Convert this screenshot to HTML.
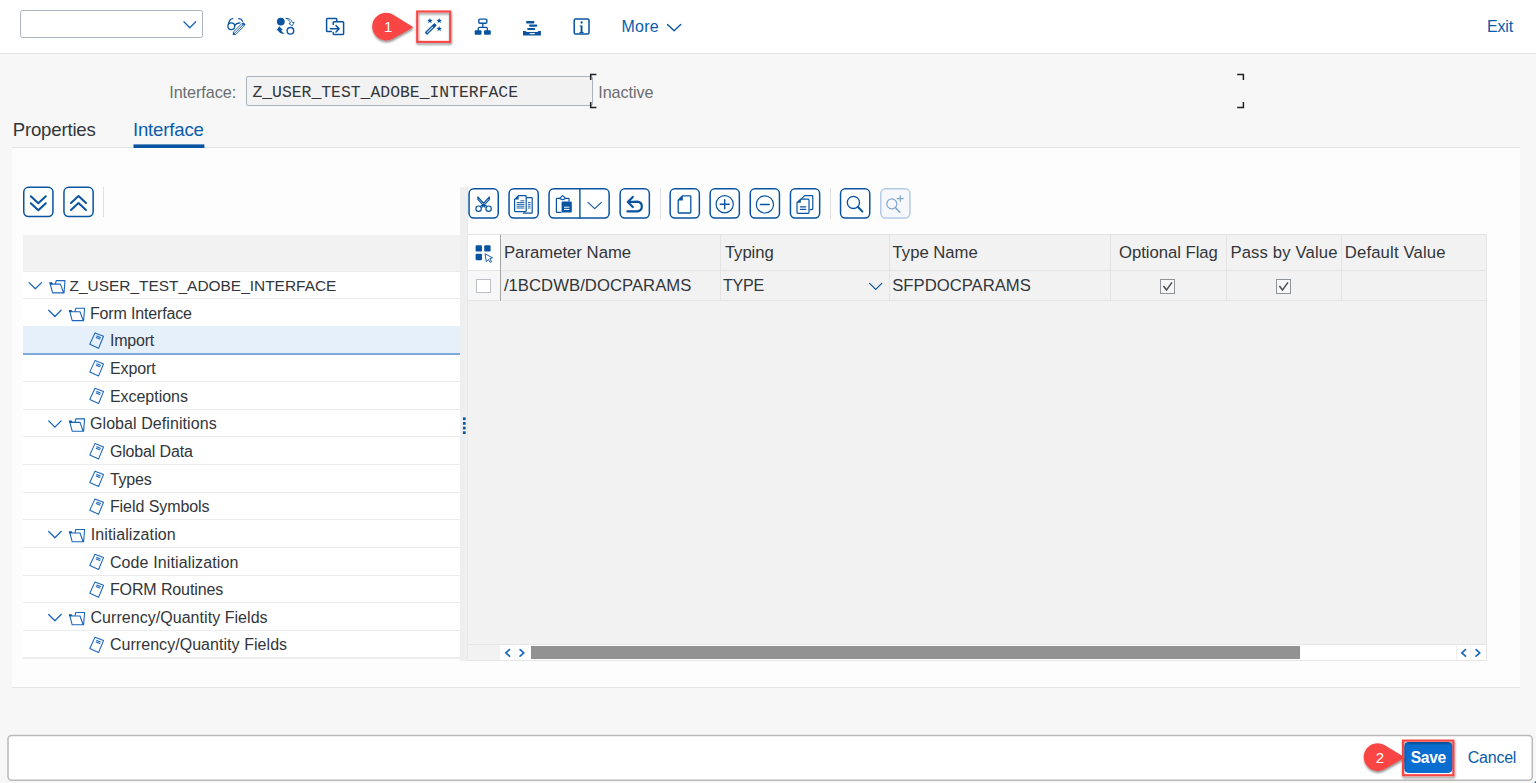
<!DOCTYPE html>
<html lang="en">
<head>
<meta charset="utf-8">
<title>Form Builder: Interface</title>
<style>
*{box-sizing:border-box;margin:0;padding:0}
html,body{width:1536px;height:783px;overflow:hidden;background:#f7f7f7;font-family:"Liberation Sans",sans-serif;color:#32363a}
.abs{position:absolute}
#top{left:0;top:0;width:1536px;height:54px;background:#fff;border-bottom:1px solid #e5e5e5}
#combo{left:20.2px;top:10.2px;width:182.6px;height:27.4px;border:1px solid #aab3bf;border-radius:2.5px;background:#fff}
.tx{position:absolute;white-space:nowrap;line-height:1}
.blue{color:#0a5cab}
svg{position:absolute;overflow:visible}
.ic{fill:none;stroke:#0854a0;stroke-width:1.4;stroke-linecap:round;stroke-linejoin:round}
.fl{fill:#0854a0;stroke:none}
.cn{font-family:"Liberation Sans",sans-serif;font-size:15px;fill:#fff}
#panel{left:12px;top:148px;width:1508px;height:540px;background:#fdfdfd;border-bottom:1px solid #e5e5e5}
.sep{position:absolute;width:1px;background:#e0e0e0}
.tl{color:#32363a}
.ti{stroke:#1a66bb}
.hc{position:absolute;top:235px;height:36px;background:#f2f2f2;border-right:1px solid #e4e4e4;border-bottom:1px solid #e4e4e4;font-size:16px;line-height:35px;padding-left:4px;white-space:nowrap;overflow:hidden}
.rc{position:absolute;top:271px;height:30px;background:#f2f2f2;border-right:1px solid #e4e4e4;border-bottom:1px solid #e4e4e4;font-size:16px;line-height:31px;padding-left:3px;white-space:nowrap;overflow:hidden}
</style>
</head>
<body>
<!-- ===== top toolbar ===== -->
<div id="top" class="abs"></div>
<div id="combo" class="abs"></div>
<svg style="left:0;top:0" width="700" height="54" viewBox="0 0 700 54"><path class="ic ti" d="M183.9 21.7 L189.8 27.8 L195.7 21.7" style="stroke-width:1.25"/><path class="ic" d="M667.5 24.5 L674.1 30.8 L680.7 24.5" style="stroke-width:1.35"/></svg>
<!--TOPICONS_START-->
<svg style="left:0;top:0" width="1536" height="54" viewBox="0 0 1536 54">
<!-- 1 glasses + pencil -->
<g class="ic" style="stroke-width:1.25">
<circle cx="231.3" cy="26.3" r="3.4"/>
<path d="M228.4 24.2 C229 21 230.4 18.7 232.8 18.6"/>
<path d="M238.8 18.7 C240.6 18.6 241.9 19.8 242.6 21.3"/>
<path d="M234.7 25.4 C235.8 23.6 237.6 22.9 240 22.8"/>
</g>
<path class="fl" d="M232.6 35.2 L233.4 32 L235.8 34.4 Z"/>
<path class="ic" style="stroke-width:0.9" d="M233.4 32 L241.4 24 L243.8 26.4 L235.8 34.4 Z M234.6 33.2 L242.6 25.2"/>
<path class="fl" d="M241.9 23.5 L242.8 22.6 Q243.4 22.2 243.9 22.7 L245.1 23.9 Q245.6 24.4 245.1 25 L244.3 25.9 Z"/>
<!-- 2 activate toggle -->
<circle class="fl" cx="280.8" cy="21.6" r="3.9"/>
<circle class="ic" cx="290.4" cy="30.8" r="3.3" style="stroke-width:1.4"/>
<path class="fl" d="M276.4 30.4 L279.3 26.3 L282.8 30 L281.3 30.1 C281.8 31.8 283 33 284.9 33.6 C281.6 34.4 279 33 278 30.3 Z"/>
<path class="ic" style="stroke-width:0.85" d="M286.2 18.3 C289.6 18.3 291.8 20 292.4 22.6 L294.2 22.4 L292.2 25.9 L288.9 23.5 L290.4 23.1 C290 21.2 288.6 19.4 286.2 18.3 Z"/>
<!-- 3 other object -->
<g class="ic" style="stroke-width:1.5">
<path d="M331.4 31.6 L327.4 31.6 Q326.6 31.6 326.6 30.8 L326.6 19.4 Q326.6 18.6 327.4 18.6 L336 18.6 Q336.8 18.6 336.8 19.4 L336.8 20.4"/>
<path d="M333.2 24.4 L333.2 22.6 Q333.2 21.8 334 21.8 L342.8 21.8 Q343.6 21.8 343.6 22.6 L343.6 33.6 Q343.6 34.4 342.8 34.4 L334 34.4 Q333.2 34.4 333.2 33.6 L333.2 32.6"/>
<path d="M330.4 28.8 L338.8 28.8 M336 25.6 L339.2 28.8 L336 32"/>
</g>
<!-- callout 1 -->
<g filter="url(#ds)">
<path d="M413.4 27.3 L393.3 14.7 A13.9 13.9 0 1 0 393.3 38.5 Z" fill="#fa4444"/>
</g>
<text class="cn" x="388.1" y="31.9" text-anchor="middle">1</text>
<!-- 4 wand -->
<g class="fl">
<path d="M0 -2.9 L0.75 -0.95 L2.8 -0.9 L1.2 0.4 L1.75 2.4 L0 1.25 L-1.75 2.4 L-1.2 0.4 L-2.8 -0.9 L-0.75 -0.95 Z" transform="translate(429.9 20.8)"/>
<path d="M0 -2.9 L0.75 -0.95 L2.8 -0.9 L1.2 0.4 L1.75 2.4 L0 1.25 L-1.75 2.4 L-1.2 0.4 L-2.8 -0.9 L-0.75 -0.95 Z" transform="translate(439.2 20.8)"/>
<path d="M0 -2.9 L0.75 -0.95 L2.8 -0.9 L1.2 0.4 L1.75 2.4 L0 1.25 L-1.75 2.4 L-1.2 0.4 L-2.8 -0.9 L-0.75 -0.95 Z" transform="translate(439.2 28.8)"/>
</g>
<path class="ic" style="stroke-width:1.3" d="M425.6 32.5 L434.4 23.9 L435.9 25.4 L427.1 34 Z"/>
<path class="fl" d="M432 26 L434.4 23.6 L436.2 25.4 L433.8 27.8 Z"/>
<!-- 5 hierarchy -->
<rect class="ic" x="478.8" y="19.1" width="8" height="4.2" rx="1" style="stroke-width:1.4"/>
<path class="ic" style="stroke-width:1.3" d="M482.8 23.4 L482.8 27.4 M478.2 30.4 L478.2 28.8 Q478.2 27.4 479.6 27.4 L486 27.4 Q487.4 27.4 487.4 28.8 L487.4 30.4"/>
<rect class="fl" x="474.7" y="30.2" width="6.8" height="4.6" rx="1"/>
<rect class="fl" x="484" y="30.2" width="6.8" height="4.6" rx="1"/>
<!-- 6 stack -->
<rect class="fl" x="526.1" y="21.1" width="8.3" height="2.3" rx="0.8"/>
<rect class="fl" x="529.1" y="24.5" width="8.1" height="2.3" rx="0.8"/>
<rect class="fl" x="527.2" y="27.9" width="7.9" height="2.2" rx="0.8"/>
<path class="fl" d="M523 31.1 L525.6 31.1 L526.6 32.1 L537.4 32.1 L538.4 31.1 L540.9 31.1 L540.9 35.5 L523 35.5 Z"/>
<rect x="529.7" y="33.1" width="5.1" height="1.1" fill="#fff"/>
<!-- 7 info -->
<rect class="ic" x="574.2" y="19.1" width="14.8" height="15" rx="1.4" style="stroke-width:1.5"/>
<circle class="fl" cx="581.6" cy="22.5" r="1.15"/>
<path class="fl" d="M579.6 25.6 L582.5 25.6 L582.5 31.8 L583.8 32.6 L583.8 33 L579.2 33 L579.2 32.6 L580.6 31.8 L580.6 26.6 L579.6 26.3 Z"/>
<!-- red box around wand -->
<defs>
<filter id="ds" x="-30%" y="-30%" width="160%" height="170%"><feDropShadow dx="0.5" dy="1.8" stdDeviation="1.3" flood-color="#000" flood-opacity="0.45"/></filter>
</defs>
<g filter="url(#ds)"><rect x="417.2" y="11.5" width="33" height="30.4" fill="none" stroke="#fa4444" stroke-width="2.1"/></g>
</svg>
<!--TOPICONS_END-->

<!-- ===== header ===== -->
<div class="abs" style="left:246px;top:76px;width:347px;height:30px;background:#f2f2f2;border:1px solid #a9b4be;border-radius:2px"></div>
<!--BRACKETS_START-->
<svg style="left:580px;top:70px" width="680" height="45" viewBox="580 70 680 45"><g fill="none" stroke="#1d2126" stroke-width="1.5">
<path d="M596.4 74.5 L590.7 74.5 L590.7 80"/><path d="M596.4 107.6 L590.7 107.6 L590.7 102"/>
<path d="M1237.2 74.5 L1243.4 74.5 L1243.4 80.1"/><path d="M1237.2 107.6 L1243.4 107.6 L1243.4 101.9"/>
</g></svg>
<!--BRACKETS_END-->

<!-- ===== tabs ===== -->
<div class="abs" style="left:12px;top:147px;width:1508px;height:1px;background:#e3e3e3"></div>
<div id="panel" class="abs"></div>
<svg style="left:130px;top:140px" width="80" height="10" viewBox="130 140 80 10"><rect x="133.5" y="144.4" width="70.9" height="3.6" fill="#0854a0"/></svg>

<!--TREE_START-->
<!-- ===== tree ===== -->
<svg style="left:23px;top:186px" width="33" height="33"><rect x="0.75" y="1.35" width="29.20" height="29.20" rx="4.8" fill="#fff" stroke="#0854a0" stroke-width="1.5"/></svg>
<svg style="left:63px;top:186px" width="33" height="33"><rect x="0.95" y="1.35" width="29.20" height="29.20" rx="4.8" fill="#fff" stroke="#0854a0" stroke-width="1.5"/></svg>
<div class="sep" style="left:103px;top:187px;height:30px"></div>
<div class="abs" style="left:23px;top:235px;width:437.5px;height:36.7px;background:#f2f2f2;border-bottom:1.2px solid #ebebeb"></div>
<div class="abs" style="left:23px;top:271.7px;width:437.5px;height:390px;background:#fff"></div>
<div class="abs" style="left:23px;top:297.91px;width:437.5px;height:1.1px;background:#ececec"></div>
<div class="tx tl" style="left:69.60px;top:278.37px;font-size:15.45px;letter-spacing:0.000px">Z_USER_TEST_ADOBE_INTERFACE</div>
<div class="abs" style="left:23px;top:325.57px;width:437.5px;height:1.1px;background:#ececec"></div>
<div class="tx tl" style="left:90.00px;top:305.57px;font-size:16px;letter-spacing:-0.162px">Form Interface</div>
<div class="abs" style="left:23px;top:325.82px;width:437.5px;height:29.26px;background:#e5f0fa;border-bottom:2px solid #7fa9d9"></div>
<div class="tx tl" style="left:109.90px;top:333.23px;font-size:16px;letter-spacing:-0.192px">Import</div>
<div class="abs" style="left:23px;top:380.89px;width:437.5px;height:1.1px;background:#ececec"></div>
<div class="tx tl" style="left:109.90px;top:360.89px;font-size:16px;letter-spacing:-0.068px">Export</div>
<div class="abs" style="left:23px;top:408.55px;width:437.5px;height:1.1px;background:#ececec"></div>
<div class="tx tl" style="left:109.90px;top:388.55px;font-size:16px;letter-spacing:-0.027px">Exceptions</div>
<div class="abs" style="left:23px;top:436.21px;width:437.5px;height:1.1px;background:#ececec"></div>
<div class="tx tl" style="left:90.00px;top:416.21px;font-size:16px;letter-spacing:0.074px">Global Definitions</div>
<div class="abs" style="left:23px;top:463.87px;width:437.5px;height:1.1px;background:#ececec"></div>
<div class="tx tl" style="left:109.90px;top:443.87px;font-size:16px;letter-spacing:-0.146px">Global Data</div>
<div class="abs" style="left:23px;top:491.53px;width:437.5px;height:1.1px;background:#ececec"></div>
<div class="tx tl" style="left:109.90px;top:471.53px;font-size:16px;letter-spacing:-0.205px">Types</div>
<div class="abs" style="left:23px;top:519.19px;width:437.5px;height:1.1px;background:#ececec"></div>
<div class="tx tl" style="left:109.90px;top:499.19px;font-size:16px;letter-spacing:-0.065px">Field Symbols</div>
<div class="abs" style="left:23px;top:546.85px;width:437.5px;height:1.1px;background:#ececec"></div>
<div class="tx tl" style="left:90.70px;top:526.85px;font-size:16px;letter-spacing:0.108px">Initialization</div>
<div class="abs" style="left:23px;top:574.51px;width:437.5px;height:1.1px;background:#ececec"></div>
<div class="tx tl" style="left:109.90px;top:554.51px;font-size:16px;letter-spacing:0.121px">Code Initialization</div>
<div class="abs" style="left:23px;top:602.17px;width:437.5px;height:1.1px;background:#ececec"></div>
<div class="tx tl" style="left:109.90px;top:582.17px;font-size:16px;letter-spacing:-0.110px">FORM Routines</div>
<div class="abs" style="left:23px;top:629.83px;width:437.5px;height:1.1px;background:#ececec"></div>
<div class="tx tl" style="left:90.50px;top:609.83px;font-size:16px;letter-spacing:0.044px">Currency/Quantity Fields</div>
<div class="abs" style="left:23px;top:657.49px;width:437.5px;height:1.1px;background:#ececec"></div>
<div class="tx tl" style="left:109.90px;top:637.49px;font-size:16px;letter-spacing:0.049px">Currency/Quantity Fields</div>
<svg style="left:0;top:0" width="470" height="783" viewBox="0 0 470 783">
<g class="ic" style="stroke-width:2">
<path d="M30.8 196.2 L38.3 203.2 L45.8 196.2 M30.8 203.2 L38.3 210.2 L45.8 203.2"/>
<path d="M71 203 L78.5 196 L86 203 M71 210 L78.5 203 L86 210"/>
</g>
<path class="ic ti" style="stroke-width:1.3" d="M29.1 282.6 l6.2 6.2 l6.2 -6.2"/>
<g transform="translate(49.2 279.9)"><path class="ic ti" style="stroke-width:1.1" d="M0.9 3.6 L3.4 13 L14.4 13 L11.2 4.2 L1.4 4.2 M6.2 4 L7 0.7 L15.8 0.7 L14.8 13 M11.2 4.2 L14.4 13"/><path class="fl" d="M0 2.4 L2.6 2.4 L4 4 L0.6 4.4 Z"/></g>
<path class="ic ti" style="stroke-width:1.3" d="M48.7 310.3 l6.2 6.2 l6.2 -6.2"/>
<g transform="translate(68.8 307.6)"><path class="ic ti" style="stroke-width:1.1" d="M0.9 3.6 L3.4 13 L14.4 13 L11.2 4.2 L1.4 4.2 M6.2 4 L7 0.7 L15.8 0.7 L14.8 13 M11.2 4.2 L14.4 13"/><path class="fl" d="M0 2.4 L2.6 2.4 L4 4 L0.6 4.4 Z"/></g>
<g transform="translate(89.2 332.4)"><path class="ic ti" style="stroke-width:1.05" d="M5.8 0.5 L14.3 3.9 L9.4 15.8 L0.6 11.8 Z M7.6 3.7 L11.2 5.2 M7 5.2 L10.6 6.7"/></g>
<g transform="translate(89.2 360.1)"><path class="ic ti" style="stroke-width:1.05" d="M5.8 0.5 L14.3 3.9 L9.4 15.8 L0.6 11.8 Z M7.6 3.7 L11.2 5.2 M7 5.2 L10.6 6.7"/></g>
<g transform="translate(89.2 387.7)"><path class="ic ti" style="stroke-width:1.05" d="M5.8 0.5 L14.3 3.9 L9.4 15.8 L0.6 11.8 Z M7.6 3.7 L11.2 5.2 M7 5.2 L10.6 6.7"/></g>
<path class="ic ti" style="stroke-width:1.3" d="M48.7 420.9 l6.2 6.2 l6.2 -6.2"/>
<g transform="translate(68.8 418.2)"><path class="ic ti" style="stroke-width:1.1" d="M0.9 3.6 L3.4 13 L14.4 13 L11.2 4.2 L1.4 4.2 M6.2 4 L7 0.7 L15.8 0.7 L14.8 13 M11.2 4.2 L14.4 13"/><path class="fl" d="M0 2.4 L2.6 2.4 L4 4 L0.6 4.4 Z"/></g>
<g transform="translate(89.2 443.1)"><path class="ic ti" style="stroke-width:1.05" d="M5.8 0.5 L14.3 3.9 L9.4 15.8 L0.6 11.8 Z M7.6 3.7 L11.2 5.2 M7 5.2 L10.6 6.7"/></g>
<g transform="translate(89.2 470.7)"><path class="ic ti" style="stroke-width:1.05" d="M5.8 0.5 L14.3 3.9 L9.4 15.8 L0.6 11.8 Z M7.6 3.7 L11.2 5.2 M7 5.2 L10.6 6.7"/></g>
<g transform="translate(89.2 498.4)"><path class="ic ti" style="stroke-width:1.05" d="M5.8 0.5 L14.3 3.9 L9.4 15.8 L0.6 11.8 Z M7.6 3.7 L11.2 5.2 M7 5.2 L10.6 6.7"/></g>
<path class="ic ti" style="stroke-width:1.3" d="M48.7 531.5 l6.2 6.2 l6.2 -6.2"/>
<g transform="translate(68.8 528.8)"><path class="ic ti" style="stroke-width:1.1" d="M0.9 3.6 L3.4 13 L14.4 13 L11.2 4.2 L1.4 4.2 M6.2 4 L7 0.7 L15.8 0.7 L14.8 13 M11.2 4.2 L14.4 13"/><path class="fl" d="M0 2.4 L2.6 2.4 L4 4 L0.6 4.4 Z"/></g>
<g transform="translate(89.2 553.7)"><path class="ic ti" style="stroke-width:1.05" d="M5.8 0.5 L14.3 3.9 L9.4 15.8 L0.6 11.8 Z M7.6 3.7 L11.2 5.2 M7 5.2 L10.6 6.7"/></g>
<g transform="translate(89.2 581.4)"><path class="ic ti" style="stroke-width:1.05" d="M5.8 0.5 L14.3 3.9 L9.4 15.8 L0.6 11.8 Z M7.6 3.7 L11.2 5.2 M7 5.2 L10.6 6.7"/></g>
<path class="ic ti" style="stroke-width:1.3" d="M48.7 614.5 l6.2 6.2 l6.2 -6.2"/>
<g transform="translate(68.8 611.8)"><path class="ic ti" style="stroke-width:1.1" d="M0.9 3.6 L3.4 13 L14.4 13 L11.2 4.2 L1.4 4.2 M6.2 4 L7 0.7 L15.8 0.7 L14.8 13 M11.2 4.2 L14.4 13"/><path class="fl" d="M0 2.4 L2.6 2.4 L4 4 L0.6 4.4 Z"/></g>
<g transform="translate(89.2 636.7)"><path class="ic ti" style="stroke-width:1.05" d="M5.8 0.5 L14.3 3.9 L9.4 15.8 L0.6 11.8 Z M7.6 3.7 L11.2 5.2 M7 5.2 L10.6 6.7"/></g>
</svg>
<!--TREE_END-->
<!--RIGHT_START-->
<!-- ===== splitter ===== -->
<div class="abs" style="left:460px;top:187px;width:8px;height:474px;background:#eeeff0;border-right:1px solid #e9e9e9"></div>
<svg style="left:460px;top:410px" width="10" height="30" viewBox="460 410 10 30"><g class="fl"><rect x="462.95" y="417.4" width="2.7" height="2.7"/><rect x="462.95" y="422.05" width="2.7" height="2.7"/><rect x="462.95" y="426.7" width="2.7" height="2.7"/><rect x="462.95" y="431.3" width="2.7" height="2.7"/></g></svg>
<!-- ===== right toolbar ===== -->
<svg style="left:468px;top:188px" width="33" height="33"><rect x="1.05" y="0.85" width="29.20" height="29.20" rx="4.8" fill="#fff" stroke="#0854a0" stroke-width="1.5"/></svg>
<svg style="left:508px;top:188px" width="33" height="33"><rect x="1.05" y="0.85" width="29.20" height="29.20" rx="4.8" fill="#fff" stroke="#0854a0" stroke-width="1.5"/></svg>
<svg style="left:548px;top:188px" width="64" height="33"><rect x="1.05" y="0.85" width="60.10" height="29.20" rx="4.8" fill="#fff" stroke="#0854a0" stroke-width="1.5"/></svg>
<svg style="left:619px;top:188px" width="33" height="33"><rect x="1.15" y="0.85" width="29.20" height="29.20" rx="4.8" fill="#fff" stroke="#0854a0" stroke-width="1.5"/></svg>
<div class="sep" style="left:659.5px;top:188px;height:31px"></div>
<svg style="left:669px;top:188px" width="33" height="33"><rect x="1.15" y="0.85" width="29.20" height="29.20" rx="4.8" fill="#fff" stroke="#0854a0" stroke-width="1.5"/></svg>
<svg style="left:709px;top:188px" width="33" height="33"><rect x="1.15" y="0.85" width="29.20" height="29.20" rx="4.8" fill="#fff" stroke="#0854a0" stroke-width="1.5"/></svg>
<svg style="left:749px;top:188px" width="33" height="33"><rect x="1.25" y="0.85" width="29.20" height="29.20" rx="4.8" fill="#fff" stroke="#0854a0" stroke-width="1.5"/></svg>
<svg style="left:789px;top:188px" width="33" height="33"><rect x="1.45" y="0.85" width="29.20" height="29.20" rx="4.8" fill="#fff" stroke="#0854a0" stroke-width="1.5"/></svg>
<div class="sep" style="left:830px;top:188px;height:31px"></div>
<svg style="left:839px;top:188px" width="33" height="33"><rect x="1.55" y="0.85" width="29.20" height="29.20" rx="4.8" fill="#fff" stroke="#0854a0" stroke-width="1.5"/></svg>
<svg style="left:880px;top:188px" width="33" height="33"><rect x="0.75" y="0.85" width="29.20" height="29.20" rx="4.8" fill="#f5f7fa" stroke="#b3cbe6" stroke-width="1.5"/></svg>
<!--RTICONS_START-->
<svg style="left:0;top:180px" width="1536" height="130" viewBox="0 180 1536 130">
<!-- scissors -->
<g class="ic" style="stroke-width:1.2">
<circle cx="478.6" cy="208.7" r="2.7"/><circle cx="488.6" cy="208.7" r="2.7"/>
<path d="M480.4 206.6 L489.4 197 L489.2 199.6 L482.2 207.2 M486.8 206.6 L477.8 197 L478 199.6 L485 207.2"/>
</g>
<!-- copy -->
<g class="ic" style="stroke-width:1.2">
<path d="M526.6 197.6 L531.6 197.6 Q532.2 197.6 532.2 198.2 L532.2 212.6 Q532.2 213.2 531.6 213.2 L523.4 213.2"/>
<path d="M518.4 195.6 L525.4 195.6 Q526.2 195.6 526.2 196.4 L526.2 210.8 Q526.2 211.6 525.4 211.6 L515.4 211.6 Q514.6 211.6 514.6 210.8 L514.6 199.4 Z" fill="#fff"/>
</g>
<path class="fl" d="M518.6 195.4 L518.6 199.6 L514.4 199.6 Z"/>
<path d="M516.6 202.6 H524.4 M516.6 204.4 H524.4 M516.6 206.2 H524.4 M516.6 208 H524.4 M520.4 200.8 H524.4 M528 202.6 H530.6 M528 204.4 H530.6 M528 206.2 H530.6 M528 208 H530.6" stroke="#0854a0" stroke-width="0.9" fill="none"/>
<!-- paste -->
<path class="ic" style="stroke-width:1.2" d="M561 212.4 L557 212.4 Q556.4 212.4 556.4 211.8 L556.4 199 Q556.4 198.4 557 198.4 L559.4 198.4 L562.6 195.6 L565.8 198.4 L568.4 198.4 Q569 198.4 569 199 L569 201 M559.4 198.4 L562.6 199.8 L565.8 198.4"/>
<rect class="fl" x="561.6" y="201.6" width="10.2" height="11" rx="1.2"/>
<path d="M564 207.2 H569.4 M564 209.4 H569.4" stroke="#fff" stroke-width="1" fill="none"/>
<path d="M579.9 188.6 V218.4" stroke="#0854a0" stroke-width="1.4" fill="none"/>
<!-- chevron -->
<path class="ic" style="stroke-width:1.1" d="M588 202.3 L594.7 208.6 L601.4 202.3"/>
<!-- undo -->
<path class="ic" style="stroke-width:2.2" d="M632.8 197 L627.8 202 L632.8 207 M628.2 202 L637.6 201.6 A4.9 4.9 0 0 1 637.6 211.3 L627.4 211.3"/>
<!-- new doc -->
<path class="ic" style="stroke-width:1.3" d="M682.6 195.8 L690 195.8 Q690.8 195.8 690.8 196.6 L690.8 212.2 Q690.8 213 690 213 L679 213 Q678.2 213 678.2 212.2 L678.2 200.2 Z"/>
<path class="fl" d="M682.8 195.4 L682.8 200.4 L677.8 200.4 Z"/>
<!-- plus / minus -->
<g class="ic" style="stroke-width:1.2"><circle cx="724.7" cy="204.2" r="8.6"/><circle cx="764.9" cy="204.4" r="8.6"/></g>
<path class="ic" style="stroke-width:1.4" d="M720.2 204.2 H729.2 M724.7 199.6 V208.8 M760.4 204.5 H769.3"/>
<!-- duplicate -->
<g class="ic" style="stroke-width:1.2">
<path d="M804.6 195.6 L812 195.6 Q812.8 195.6 812.8 196.4 L812.8 208.8 Q812.8 209.6 812 209.6 L810 209.6 M801.6 198.6 L804.6 195.6"/>
<path d="M800.6 199.2 L808.2 199.2 Q809 199.2 809 200 L809 212.6 Q809 213.4 808.2 213.4 L797.8 213.4 Q797 213.4 797 212.6 L797 202.6 Z"/>
<path d="M800.4 206.8 H805.8 M800.4 209.3 H805.8"/>
</g>
<path class="fl" d="M800.8 198.8 L800.8 202.8 L796.8 202.8 Z"/>
<!-- search -->
<circle class="ic" cx="853.4" cy="202.4" r="6.1" style="stroke-width:1.3"/>
<path class="ic" style="stroke-width:2" d="M858 207 L862.4 211.6"/>
<!-- search+ (disabled) -->
<g style="opacity:.5"><circle class="ic" cx="891.8" cy="203.9" r="5" style="stroke-width:1.2"/>
<path class="ic" style="stroke-width:1.6" d="M895.6 207.8 L899.8 212.2"/>
<path class="ic" style="stroke-width:1.1" d="M897.2 198.6 H903.2 M900.2 195.6 V201.6"/></g>
</svg>
<!--RTICONS_END-->
<!-- ===== table ===== -->
<div class="abs" style="left:468px;top:234px;width:1019px;height:427px;background:#f2f2f2;border-top:1px solid #e3e3e3"></div>
<div class="hc" style="left:468px;width:32.5px;background:#fff"></div>
<div class="hc" style="left:501.5px;width:219.5px"></div>
<div class="hc" style="left:721px;width:168.5px"></div>
<div class="hc" style="left:889.5px;width:221px"></div>
<div class="hc" style="left:1110.5px;width:116px;text-align:center;padding-left:0"></div>
<div class="hc" style="left:1226.5px;width:115px;text-align:center;padding-left:0"></div>
<div class="hc" style="left:1341.5px;width:145px"></div>
<div class="rc" style="left:468px;width:32.5px;background:#f7f7f7"></div>
<div class="rc" style="left:501.5px;width:219.5px;padding-left:2px"></div>
<div class="rc" style="left:721px;width:168.5px;padding-left:2px"></div>
<div class="rc" style="left:889.5px;width:221px"></div>
<div class="rc" style="left:1110.5px;width:116px"></div>
<div class="rc" style="left:1226.5px;width:115px"></div>
<div class="rc" style="left:1341.5px;width:145px"></div>
<div class="abs" style="left:500px;top:235px;width:1px;height:66px;background:#a4a4a4"></div>
<div class="abs" style="left:476px;top:279px;width:15px;height:14px;background:#fff;border:1px solid #bcbfc6"></div>
<div class="abs" style="left:1160px;top:279px;width:15px;height:15px;background:#f7f7f7;border:1px solid #8f949a"></div>
<div class="abs" style="left:1276px;top:279px;width:15px;height:15px;background:#f7f7f7;border:1px solid #8f949a"></div>
<!-- scrollbar -->
<div class="abs" style="left:468px;top:644px;width:1019px;height:17px;background:#f2f2f2;border-top:1px solid #e6e6e6;border-bottom:1px solid #e6e6e6"></div>
<div class="abs" style="left:500px;top:645px;width:986px;height:15px;background:#fff"></div>
<div class="abs" style="left:531px;top:646px;width:769px;height:13px;background:#929292"></div>
<div class="abs" style="left:514px;top:645px;width:1px;height:15px;background:#f3f3f3"></div>
<div class="abs" style="left:1456px;top:645px;width:1px;height:15px;background:#efefef"></div>
<div class="abs" style="left:1470px;top:645px;width:1px;height:15px;background:#f1f1f1"></div>
<div class="abs" style="left:1486px;top:235px;width:1px;height:426px;background:#e6e6e6"></div>
<!--TBLICONS_START-->
<svg style="left:0;top:230px" width="1536" height="440" viewBox="0 230 1536 440">
<!-- select all icon -->
<g class="fl"><rect x="475.6" y="245.2" width="6.4" height="6.4" rx="1.2"/><rect x="484.2" y="245.2" width="6.4" height="6.4" rx="1.2"/><rect x="475.6" y="253.8" width="6.4" height="6.4" rx="1.2"/></g>
<path class="ic" style="stroke-width:0.9;fill:#fff" d="M485.4 254 L492.6 257.8 L489.8 258.6 L491.6 261.6 L490 262.4 L488.4 259.4 L486.6 261.4 Z"/>
<!-- cell chevron -->
<path class="ic" style="stroke-width:1.2" d="M869.6 283.4 L875.7 289.4 L881.8 283.4"/>
<!-- checkmarks -->
<path d="M1163.4 286 L1166.5 289.9 L1172 282.4" stroke="#4a4f55" stroke-width="1.5" fill="none"/>
<path d="M1279.4 286 L1282.5 289.9 L1288 282.4" stroke="#4a4f55" stroke-width="1.5" fill="none"/>
<!-- scroll arrows -->
<g class="ic ti" style="stroke-width:1.7">
<path d="M509.5 649.6 L505.8 652.9 L509.5 656.2"/><path d="M520.1 649.6 L523.8 652.9 L520.1 656.2"/>
<path d="M1465.5 649.6 L1461.8 652.9 L1465.5 656.2"/><path d="M1476.1 649.6 L1479.8 652.9 L1476.1 656.2"/>
</g>
</svg>
<!--TBLICONS_END-->
<!--RIGHT_END-->
<!--FOOTER_START-->
<!-- ===== footer ===== -->
<svg style="left:0;top:720px" width="1536" height="63" viewBox="0 720 1536 63">
<defs><filter id="ds2" x="-30%" y="-30%" width="160%" height="170%"><feDropShadow dx="0.5" dy="1.8" stdDeviation="1.3" flood-color="#000" flood-opacity="0.45"/></filter></defs>
<rect x="8" y="735.6" width="1524.3" height="44.6" rx="3.6" fill="#fff" stroke="#bababa" stroke-width="1.5"/>
<rect x="1534.6" y="781.4" width="1.4" height="1.6" fill="#2a62a8"/>
<rect x="1404.2" y="741.9" width="48.4" height="31.2" rx="5" fill="#0a6ed1"/>
<g filter="url(#ds2)"><path d="M1405 757.6 L1384.8 745.2 A13.9 13.9 0 1 0 1384.8 769 Z" fill="#fa4444"/></g>
<text class="cn" x="1380" y="762.6" text-anchor="middle">2</text>
<g filter="url(#ds2)"><rect x="1403" y="740.6" width="50.4" height="34.6" fill="none" stroke="#fa4444" stroke-width="2.1"/></g>
</svg>
<!--FOOTER_END-->
<!--TEXTS_START-->
<!-- ===== texts ===== -->
<div class="tx" style="left:621.52px;top:18.81px;font-size:16px;color:#0a5cab;letter-spacing:0.207px">More</div>
<div class="tx" style="left:1486.92px;top:18.71px;font-size:16px;color:#0a5cab;letter-spacing:-0.140px">Exit</div>
<div class="tx" style="left:169.20px;top:84.04px;font-size:16.2px;color:#6a6d70;letter-spacing:-0.044px">Interface:</div>
<div class="tx" style="left:252.43px;top:85.18px;font-size:16.4px;color:#32363a;font-family:'Liberation Mono',monospace">Z_USER_TEST_ADOBE_INTERFACE</div>
<div class="tx" style="left:598.30px;top:84.04px;font-size:16.2px;color:#6a6d70;letter-spacing:-0.089px">Inactive</div>
<div class="tx" style="left:12.71px;top:120.61px;font-size:18.6px;color:#32363a;letter-spacing:-0.181px">Properties</div>
<div class="tx" style="left:132.98px;top:120.61px;font-size:18.6px;color:#0a5cab;letter-spacing:-0.180px">Interface</div>
<div class="tx" style="left:503.96px;top:244.51px;font-size:16.7px;color:#32363a;letter-spacing:0.009px">Parameter Name</div>
<div class="tx" style="left:724.92px;top:244.51px;font-size:16.7px;color:#32363a;letter-spacing:-0.072px">Typing</div>
<div class="tx" style="left:892.62px;top:244.51px;font-size:16.7px;color:#32363a;letter-spacing:-0.024px">Type Name</div>
<div class="tx" style="left:1119.01px;top:244.51px;font-size:16.7px;color:#32363a;letter-spacing:-0.032px">Optional Flag</div>
<div class="tx" style="left:1230.46px;top:244.51px;font-size:16.7px;color:#32363a;letter-spacing:0.129px">Pass by Value</div>
<div class="tx" style="left:1344.76px;top:244.51px;font-size:16.7px;color:#32363a;letter-spacing:0.151px">Default Value</div>
<div class="tx" style="left:503.90px;top:277.81px;font-size:16.7px;color:#32363a;letter-spacing:0.033px">/1BCDWB/DOCPARAMS</div>
<div class="tx" style="left:722.94px;top:277.22px;font-size:16.1px;color:#32363a;letter-spacing:-0.205px">TYPE</div>
<div class="tx" style="left:892.25px;top:277.81px;font-size:16.7px;color:#32363a;letter-spacing:-0.018px">SFPDOCPARAMS</div>
<div class="tx" style="left:1410.67px;top:749.84px;font-size:15.6px;color:#fff;letter-spacing:-0.297px;font-weight:bold">Save</div>
<div class="tx" style="left:1467.80px;top:749.71px;font-size:16px;color:#0a5cab;letter-spacing:-0.244px">Cancel</div>
<!--TEXTS_END-->
</body>
</html>
